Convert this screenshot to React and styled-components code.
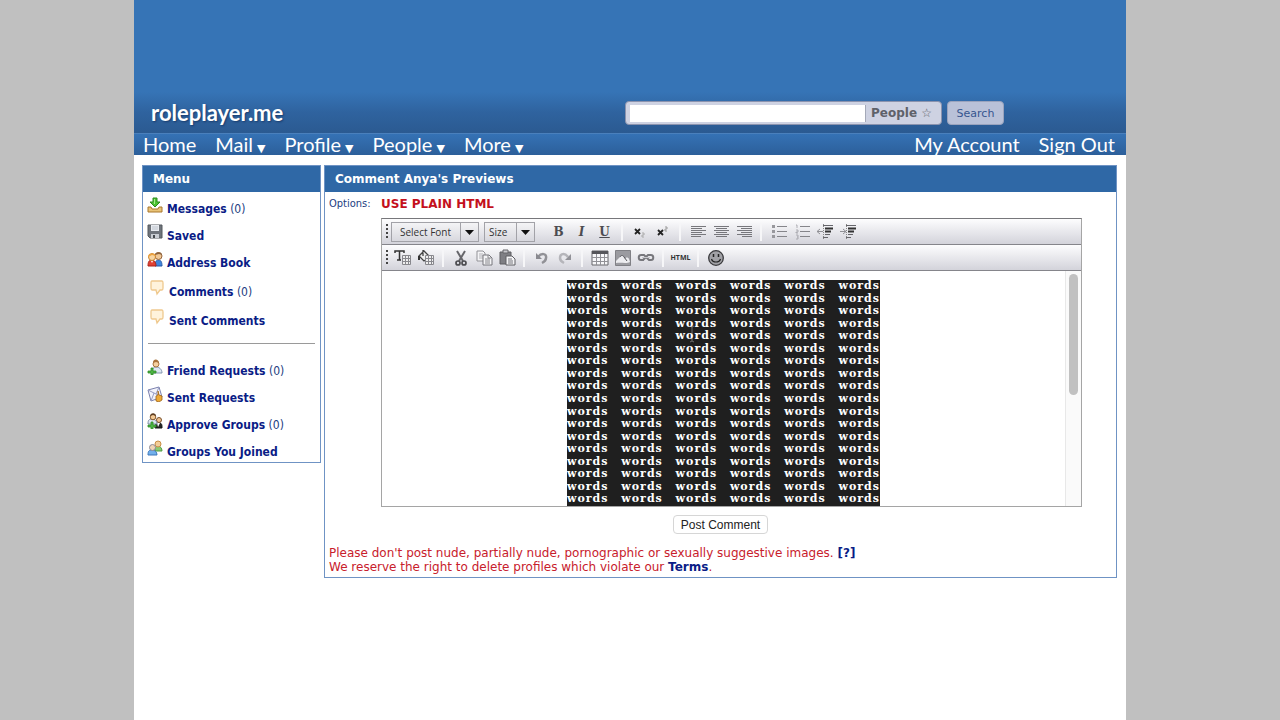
import React from "react";

import styled, { createGlobalStyle } from "styled-components";

const GlobalStyle = createGlobalStyle`
    * {
        box-sizing: border-box;
    }

    body {
        margin: 0;
        padding-right: 20px;
        background: #c0c0c0;
        font-family: Verdana, "DejaVu Sans", sans-serif;
        font-size: 12px;
        color: #1c3d7f;
    }

    button,
    input,
    select {
        font-family: inherit;
        margin: 0;
    }
`;

const Page = styled.div`
    max-width: 992px;
    min-height: 100vh;
    margin: 0 auto;
    background: white;
`;

const Header = styled.header`
    display: flex;
    align-items: flex-end;
    justify-content: space-between;
    height: 133px;
    padding: 0 122px 8px 17px;
    background: linear-gradient(#3674b6 0, #3674b6 92px, #2f639f 112px, #2b5a91 133px);
`;

const Logo = styled.a`
    color: white;
    font-family: "Lato", sans-serif;
    font-size: 22px;
    font-weight: bold;
    line-height: 24px;
    text-decoration: none;
    text-shadow: 1px 1px 2px rgba(10, 35, 80, 0.6);
`;

const SearchForm = styled.form`
    display: flex;
    gap: 5px;
`;

const SearchBox = styled.div`
    display: flex;
    align-items: center;
    width: 317px;
    height: 24px;
    padding: 0 4px;
    border: 1px solid #8b93ae;
    border-radius: 4px;
    background: #ced2e2;
`;

const SearchInput = styled.input`
    flex: 1;
    min-width: 0;
    height: 17px;
    border: none;
    border-right: 1px solid #a4a9b8;
    background: white;
`;

const ScopeButton = styled.button`
    padding: 0 5px;
    border: none;
    background: transparent;
    color: #5f6169;
    font-size: 12px;
    font-weight: bold;
`;

const SearchButton = styled.button`
    width: 57px;
    height: 24px;
    padding: 0;
    border: 1px solid #9aa3bd;
    border-radius: 4px;
    background: #b9c1d8;
    color: #36558f;
    font-size: 11px;
`;

const Nav = styled.nav`
    display: flex;
    gap: 19px;
    height: 22px;
    padding: 0 11px 0 9px;
    border-top: 1px solid #4a80bc;
    background: linear-gradient(#3572b5, #2c5f9a);
`;

const NavLink = styled.a`
    margin-left: ${(props) => (props.$right ? "auto" : "0")};
    color: white;
    font-family: "Century Gothic", "Lato", sans-serif;
    font-size: 20px;
    line-height: 20px;
    text-decoration: none;
    white-space: nowrap;
`;

const Arrow = styled.span`
    margin-left: 4px;
    font-family: "DejaVu Sans", sans-serif;
    font-size: 11px;
`;

const Content = styled.div`
    display: grid;
    grid-template-columns: 179px 1fr;
    align-items: start;
    gap: 3px;
    padding: 10px 9px 10px 8px;
`;

const Panel = styled.section`
    border: 1px solid #6f93c4;
    background: white;
`;

const PanelTitle = styled.h2`
    margin: 0;
    padding: 1px 10px 0;
    background: #2f68a6;
    color: white;
    font-size: 12px;
    line-height: 25px;
`;

const MenuList = styled.ul`
    display: flex;
    flex-direction: column;
    gap: 7px;
    margin: 0;
    padding: 5px 4px 2px;
    list-style: none;
`;

const MenuItem = styled.li`
    display: flex;
    gap: 4px;
    padding: ${(props) => (props.$indent ? "2px 0 0 2px" : "0")};

    svg {
        flex: none;
    }
`;

const MenuLabel = styled.span`
    padding-top: 5px;
    font-family: Tahoma, "DejaVu Sans Condensed", "Noto Sans", sans-serif;
    line-height: 15px;
    white-space: nowrap;
`;

const Link = styled.a`
    color: #0a1c86;
    font-weight: bold;
    text-decoration: none;
`;

const MenuRule = styled.hr`
    height: 1px;
    margin: 12px 5px 10px;
    border: none;
    background: #9a9a9a;
`;

const CommentGrid = styled.div`
    display: grid;
    grid-template-columns: 52px 1fr;
    padding: 0 34px 0 4px;
`;

const OptionText = styled.span`
    font-family: Tahoma, "DejaVu Sans Condensed", "Noto Sans", sans-serif;
    font-size: 11px;
    line-height: 24px;
`;

const PlainLink = styled.a`
    justify-self: start;
    color: #c4101c;
    font-size: 12px;
    font-weight: bold;
    line-height: 24px;
    text-decoration: none;
`;

const Editor = styled.div`
    grid-column: 2;
    margin-top: 2px;
    border: 1px solid #a5a5a5;
    border-top-color: #77777b;
`;

const Toolbar = styled.div`
    display: flex;
    align-items: center;
    height: 26px;
    padding-left: 4px;
    border-bottom: 1px solid #85858b;
    background: linear-gradient(#fdfdfe, #e4e4e9 60%, #d3d3da);
`;

const Grip = styled.span`
    width: 5px;
    height: 16px;
    background: radial-gradient(circle at 1px 1px, #444 1px, transparent 1px) 0 0 / 6px 4px;
`;

const SelectBox = styled.div`
    display: flex;
    width: ${(props) => props.$width};
    height: 20px;
    margin-right: ${(props) => props.$gap || "0"};
    border: 1px solid #a2a2a8;
    background: linear-gradient(#f4f4f6, #d8d8de);
    position: relative;

    svg {
        position: absolute;
        top: 0;
        right: 0;
        pointer-events: none;
    }
`;

const ToolSelect = styled.select`
    width: 100%;
    padding: 0 20px 0 ${(props) => props.$pad};
    border: none;
    appearance: none;
    background: transparent;
    color: #333;
    font-family: "Trebuchet MS", "Open Sans", sans-serif;
    font-size: 10px;
`;

const ToolButton = styled.button`
    display: flex;
    align-items: center;
    justify-content: center;
    width: 23px;
    height: 22px;
    padding: 0;
    border: none;
    background: transparent;
    color: #55555a;
`;

const Separator = styled.span`
    width: 12px;
    height: 18px;
    background: linear-gradient(#f6f6f8, #f6f6f8) center / 2px 18px no-repeat;
`;

const StyleLetter = styled.span`
    color: #4c4c51;
    font-family: "DejaVu Serif", serif;
    font-size: 12px;
    font-weight: bold;
    font-style: ${(props) => (props.$italic ? "italic" : "normal")};
    text-decoration: ${(props) => (props.$underline ? "underline" : "none")};
`;

const HtmlText = styled.span`
    font-family: "Trebuchet MS", "Open Sans", sans-serif;
    font-size: 7px;
    font-weight: bold;
    color: #333;
`;

const EditArea = styled.div`
    display: flex;
    height: 235px;
`;

const EditBody = styled.div`
    position: relative;
    flex: 1;
    display: flex;
    justify-content: center;
    padding-top: 9px;
    outline: none;
`;

const WordSheet = styled.div`
    display: grid;
    grid-template-rows: repeat(18, minmax(0, 1fr));
    width: 313px;
    background: #1f1f1f;
    color: white;
    font-family: "DejaVu Serif", serif;
    font-size: 11px;
    font-weight: bold;
    letter-spacing: 1px;
    line-height: 12px;
`;

const WordRow = styled.div`
    display: flex;
    justify-content: space-between;
`;

const TextCursor = styled.svg`
    position: absolute;
    top: 54px;
    left: 306px;
    opacity: 0.35;
`;

const ScrollTrack = styled.div`
    width: 16px;
    padding: 3px;
    border-left: 1px solid #e8e8e8;
    background: #fafafa;
`;

const ScrollThumb = styled.div`
    width: 9px;
    height: 121px;
    border-radius: 5px;
    background: #c1c1c1;
`;

const PostButton = styled.button`
    display: block;
    width: 95px;
    height: 19px;
    margin: 8px auto 12px;
    padding: 0;
    border: 1px solid #d6d6d6;
    border-radius: 4px;
    background: white;
    color: #222;
    font-family: "Liberation Sans", sans-serif;
    font-size: 12px;
`;

const Notice = styled.p`
    margin: 0;
    padding: 0 4px 3px;
    color: #c8202c;
    font-size: 12px;
    line-height: 14px;
`;

function Svg({ size = 18, children }) {
    return (
        <svg width={size} height={size} viewBox={`0 0 ${size} ${size}`} fill='none' aria-hidden='true'>
            {children}
        </svg>
    );
}

/* menu icons */

const InboxIcon = () => (
    <Svg size={16}>
        <path d='M1 10h3l1 2h6l1-2h3v5H1z' fill='#e9c377' stroke='#a9772c' />
        <path d='M6 1h4v4h3l-5 5-5-5h3z' fill='#4cc233' stroke='#2b8a1e' />
        <path d='M7.500 2v5' stroke='#a5ec8c' />
    </Svg>
);

const DiskIcon = () => (
    <Svg size={16}>
        <path d='M1 1h14v13H3l-2-2z' fill='#6f747b' stroke='#54585e' />
        <path d='M4 1h8v6H4z' fill='#e8ebf0' />
        <path d='M4 10h8v4H4z' fill='#c9cdd3' />
        <path d='M6 11h2v3H6z' fill='#44484d' />
        <path d='M5 3h6M5 5h6' stroke='#bfc5ce' />
    </Svg>
);

const PeopleIcon = () => (
    <Svg size={16}>
        <path d='M8 15c0-4 1-6 3.500-6S15 11 15 15z' fill='#3f86dd' stroke='#2459a8' />
        <circle cx='11.500' cy='5' r='3.500' fill='#f0c896' stroke='#96643a' />
        <path d='M8 4c0-3 6-4 7 0l-3-1z' fill='#8c6440' />
        <path d='M1 15c0-4 1-6 3.500-6S9 11 9 15z' fill='#e14033' stroke='#a82118' />
        <circle cx='5' cy='6' r='3.500' fill='#f7d5a2' stroke='#c98330' />
        <path d='M1 6c0-4 7-5 8-1L5 4z' fill='#eda340' />
        <path d='M4 10l1 2 1-2z' fill='white' />
    </Svg>
);

const BubbleIcon = () => (
    <Svg size={16}>
        <path
            d='M3 1h10q1 0 1 2v5q0 2-1 2h-2l-3 4-1-4H3q-1 0-1-2V3q0-2 1-2z'
            fill='#fff3dc'
            stroke='#efc98e'
            strokeWidth='1.300'
        />
    </Svg>
);

const FriendIcon = () => (
    <Svg size={16}>
        <path d='M5 14c0-4 1-6 4-6s6 2 6 6z' fill='#dde7f2' stroke='#8496b0' />
        <circle cx='9' cy='5' r='3' fill='#f5cf9f' stroke='#a8733f' />
        <path d='M6 4c0-5 6-4 6 0L9 3z' fill='#a8713a' />
        <path d='M4 9h2v3h3v2H6v2H4v-2H1v-2h3z' fill='#4cb443' stroke='#2f8a27' strokeWidth='.8' />
    </Svg>
);

const EnvelopeIcon = () => (
    <Svg size={16}>
        <path d='M1 4l11-3 3 10-11 4z' fill='#f2f3fb' stroke='#7a80ad' />
        <path d='M1 4l8 4 3-7M4 15l3-8M15 11L9 8' stroke='#959bc4' />
        <path d='M11 5l1 4 3 1v4l-3 2-3-1V10l2-1z' fill='#edaa37' stroke='#9d621b' strokeWidth='.8' />
    </Svg>
);

const ApproveIcon = () => (
    <Svg size={16}>
        <path d='M8 15c0-4 1-5 4-5s3 2 3 5z' fill='#242424' stroke='#151515' />
        <path d='M10 10l1 4 2-4z' fill='white' />
        <circle cx='12' cy='7' r='2.500' fill='#edc291' stroke='#7a502a' />
        <path d='M1 11c0-4 1-5 4-5s5 2 5 5z' fill='#dce6f1' stroke='#7d8da5' />
        <circle cx='6' cy='4' r='2.800' fill='#f2ca97' stroke='#875a2e' />
        <path d='M3 3c1-4 6-3 6 0L6 2z' fill='#5e3e22' />
        <path d='M4 9h2v3h3v2H6v2H4v-2H1v-2h3z' fill='#4cb443' stroke='#2f8a27' strokeWidth='.8' />
    </Svg>
);

const GroupIcon = () => (
    <Svg size={16}>
        <path d='M8 11c0-4 1-5 3-5s4 2 4 5z' fill='#8acb73' stroke='#509b42' />
        <circle cx='11' cy='4' r='3' fill='#f2cd98' stroke='#c98d44' />
        <path d='M1 15c0-4 1-5 4-5s5 2 5 5z' fill='#72b0ec' stroke='#3c77bb' />
        <circle cx='5.500' cy='7.500' r='3' fill='#f0d4b5' stroke='#8b8a96' />
    </Svg>
);

/* editor icons */

const DropArrow = () => (
    <Svg>
        <path d='M0 0v18' stroke='#a2a2a8' strokeWidth='2' />
        <path d='M5 7h9l-4.500 5z' fill='#111' />
    </Svg>
);

const SubIcon = () => (
    <Svg>
        <path d='M4 6l5 5M9 6l-5 5' stroke='#222' strokeWidth='1.800' />
        <path d='M11 10h2v2h-2v2h2' stroke='#aaa' />
    </Svg>
);

const SuperIcon = () => (
    <Svg>
        <path d='M4 7l5 5M9 7l-5 5' stroke='#222' strokeWidth='1.800' />
        <path d='M11 4h2v2h-2v2h2' stroke='#999' />
    </Svg>
);

const alignLines = {
    left: "M2 3.500h15M2 5.500h11M2 7.500h15M2 9.500h11M2 11.500h15M2 13.500h10",
    center: "M2 3.500h15M4 5.500h11M2 7.500h15M4 9.500h11M2 11.500h15M4 13.500h11",
    right: "M2 3.500h15M6 5.500h11M2 7.500h15M6 9.500h11M2 11.500h15M7 13.500h10",
};

const AlignIcon = ({ side }) => (
    <Svg>
        <path d={alignLines[side]} stroke='#77777c' />
    </Svg>
);

const BulletsIcon = () => (
    <Svg>
        <path d='M7 3.500h10M7 8.500h10M7 13.500h10' stroke='#85858a' />
        <path d='M2 2h3v3H2zM2 7h3v3H2zM2 12h3v3H2z' fill='#98989d' />
    </Svg>
);

const NumbersIcon = () => (
    <Svg>
        <path d='M7 3.500h10M7 8.500h10M7 13.500h10' stroke='#85858a' />
        <path d='M3 2h1v3M3 7h2v2H3v1h2M3 12h2v4H3M4 14h1' stroke='#a0a0a5' strokeWidth='.8' />
    </Svg>
);

const IndentIcon = ({ out }) => (
    <Svg>
        <path d='M7 2.500h10M9 11.500h5M7 14.500h5' stroke='#66666b' />
        <path d='M9 5.500h8M9 8.500h6' stroke='#333' strokeWidth='2' />
        <path d={out ? "M7 8.500H1M4 6L1 8.500 4 11" : "M1 8.500h6M4 6l3 2.500L4 11"} stroke='#919196' />
        <path d='M7.500 1v16' stroke='#888' strokeDasharray='1 1' />
    </Svg>
);

const TextGridIcon = () => (
    <Svg>
        <path d='M1 4V2h9v2M5.500 2v9M3 11h4' stroke='#333' strokeWidth='1.500' />
        <path d='M8.500 6.500h8v9h-8z' fill='#eee' stroke='#88888d' />
        <path d='M8 9.500h9M8 12.500h9M11.500 6v10M14.500 6v10' stroke='#88888d' />
    </Svg>
);

const FillGridIcon = () => (
    <Svg>
        <path d='M2 7l5-5 6 6-6 4zM6 1v6' fill='#eee' stroke='#444' strokeWidth='1.300' />
        <path d='M2 7v4' stroke='#333' strokeWidth='2' />
        <path d='M8.500 6.500h8v9h-8z' fill='#eee' stroke='#88888d' />
        <path d='M8 9.500h9M8 12.500h9M11.500 6v10M14.500 6v10' stroke='#88888d' />
    </Svg>
);

const CutIcon = () => (
    <Svg>
        <path d='M5 2l6 10M13 2L7 12' stroke='#66666b' strokeWidth='2' />
        <circle cx='6' cy='14' r='2' stroke='#4c4c50' strokeWidth='1.700' />
        <circle cx='12' cy='14' r='2' stroke='#4c4c50' strokeWidth='1.700' />
    </Svg>
);

const CopyIcon = () => (
    <Svg>
        <path d='M2 2h6l2 2v8H2z' fill='#f4f4f6' stroke='#929297' />
        <path d='M4 5h4M4 7h4M4 9h4' stroke='#b1b1b6' />
        <path d='M8 6h6l3 3v7H8z' fill='#f4f4f6' stroke='#77777c' />
        <path d='M10 10h5M10 12h5M10 14h5M13 6v3h3' stroke='#88888d' />
    </Svg>
);

const PasteIcon = () => (
    <Svg>
        <path d='M2 3h11v12H2z' fill='#7f7f84' stroke='#5e5e63' />
        <path d='M5 1h5v3H5z' fill='#c9c9ce' stroke='#66666b' />
        <path d='M8 7h6l3 3v6H8z' fill='#f4f4f6' stroke='#5e5e63' />
        <path d='M10 10h4M10 12h5M10 14h5' stroke='#77777c' />
    </Svg>
);

const UndoIcon = () => (
    <Svg>
        <path d='M5 8c3-4 9-4 8 1 0 2-2 4-4 5' stroke='#919196' strokeWidth='2.500' />
        <path d='M3 4v6h6z' fill='#8a8a90' />
    </Svg>
);

const RedoIcon = () => (
    <Svg>
        <path d='M12 8C9 4 4 4 4 9c0 2 2 4 4 5' stroke='#b5b5ba' strokeWidth='2.500' />
        <path d='M15 5v6H9z' fill='#929298' />
    </Svg>
);

const TableIcon = () => (
    <Svg>
        <path d='M1 2h16v14H1z' fill='#f7f7f9' stroke='#66666b' />
        <path d='M1 2h16v3H1z' fill='#55555a' />
        <path d='M1 8.500h16M1 12.500h16M5.500 5v11M9.500 5v11M13.500 5v11' stroke='#919196' />
    </Svg>
);

const ImageIcon = () => (
    <Svg>
        <path d='M1.500 1.500h15v15h-15z' fill='#9b9ba0' stroke='#808085' />
        <path d='M2 12l4-4c1-2 3-2 4 0l1 2c1-2 3-2 4 0l1 3c-4 2-9 0-14 1z' fill='#ededf0' />
        <path d='M6 8c1-2 3-2 4 0l3 4' stroke='#55555a' />
    </Svg>
);

const LinkIcon = () => (
    <Svg>
        <path
            d='M7 11H4c-3 0-3-5 0-5h3l5 5h2c3 0 3-5 0-5h-3l-5 5'
            stroke='#77777c'
            strokeWidth='2'
        />
        <path d='M5 8.500h8' stroke='#c5c5ca' />
    </Svg>
);

const SmileIcon = () => (
    <Svg>
        <circle cx='9' cy='9' r='7.300' fill='#a1a1a6' stroke='#3a3a3d' strokeWidth='1.300' />
        <path d='M6.500 5v3M11.500 5v3' stroke='#222' strokeWidth='1.500' />
        <path d='M4.500 10c1 4 8 4 9 0' stroke='#222' strokeWidth='1.200' />
    </Svg>
);

const navItems = ["Mail", "Profile", "People", "More"];

const mailItems = [
    { label: "Messages", icon: InboxIcon, count: 0 },
    { label: "Saved", icon: DiskIcon },
    { label: "Address Book", icon: PeopleIcon },
    { label: "Comments", icon: BubbleIcon, count: 0, indent: true },
    { label: "Sent Comments", icon: BubbleIcon, indent: true },
];

const requestItems = [
    { label: "Friend Requests", icon: FriendIcon, count: 0 },
    { label: "Sent Requests", icon: EnvelopeIcon },
    { label: "Approve Groups", icon: ApproveIcon, count: 0 },
    { label: "Groups You Joined", icon: GroupIcon },
];

const formatTools = [
    [
        { name: "Bold", icon: <StyleLetter>B</StyleLetter> },
        { name: "Italic", icon: <StyleLetter $italic>I</StyleLetter> },
        { name: "Underline", icon: <StyleLetter $underline>U</StyleLetter> },
    ],
    [
        { name: "Subscript", icon: <SubIcon /> },
        { name: "Superscript", icon: <SuperIcon /> },
    ],
    [
        { name: "Align left", icon: <AlignIcon side='left' /> },
        { name: "Align center", icon: <AlignIcon side='center' /> },
        { name: "Align right", icon: <AlignIcon side='right' /> },
    ],
    [
        { name: "Bullets", icon: <BulletsIcon /> },
        { name: "Numbering", icon: <NumbersIcon /> },
        { name: "Outdent", icon: <IndentIcon out /> },
        { name: "Indent", icon: <IndentIcon /> },
    ],
];

const insertTools = [
    [
        { name: "Text color", icon: <TextGridIcon /> },
        { name: "Background color", icon: <FillGridIcon /> },
    ],
    [
        { name: "Cut", icon: <CutIcon /> },
        { name: "Copy", icon: <CopyIcon /> },
        { name: "Paste", icon: <PasteIcon /> },
    ],
    [
        { name: "Undo", icon: <UndoIcon /> },
        { name: "Redo", icon: <RedoIcon /> },
    ],
    [
        { name: "Table", icon: <TableIcon /> },
        { name: "Image", icon: <ImageIcon /> },
        { name: "Link", icon: <LinkIcon /> },
    ],
    [{ name: "Edit HTML", icon: <HtmlText>HTML</HtmlText> }],
    [{ name: "Smileys", icon: <SmileIcon /> }],
];

function Tools({ groups }) {
    return groups.map((group, i) => (
        <React.Fragment key={i}>
            {i > 0 && <Separator />}
            {group.map((tool) => (
                <ToolButton type='button' key={tool.name} aria-label={tool.name}>
                    {tool.icon}
                </ToolButton>
            ))}
        </React.Fragment>
    ));
}

function Menu({ items }) {
    return (
        <MenuList>
            {items.map(({ label, icon: Icon, count, indent }) => (
                <MenuItem key={label} $indent={indent}>
                    <Icon />
                    <MenuLabel>
                        <Link href='#'>{label}</Link>
                        {count !== undefined && ` (${count})`}
                    </MenuLabel>
                </MenuItem>
            ))}
        </MenuList>
    );
}

function CommentEditor() {
    return (
        <Editor>
            <Toolbar>
                <Grip />
                <SelectBox $width='88px' $gap='5px'>
                    <ToolSelect $pad='8px' aria-label='Font'>
                        <option>Select Font</option>
                    </ToolSelect>
                    <DropArrow />
                </SelectBox>
                <SelectBox $width='51px' $gap='12px'>
                    <ToolSelect $pad='4px' aria-label='Size'>
                        <option>Size</option>
                    </ToolSelect>
                    <DropArrow />
                </SelectBox>
                <Tools groups={formatTools} />
            </Toolbar>
            <Toolbar>
                <Grip />
                <Tools groups={insertTools} />
            </Toolbar>
            <EditArea>
                <EditBody role='textbox' tabIndex={0} aria-label='Comment'>
                    <WordSheet>
                        {Array.from({ length: 18 }, (_, row) => (
                            <WordRow key={row}>
                                {Array.from({ length: 6 }, (_, col) => (
                                    <span key={col}>words</span>
                                ))}
                            </WordRow>
                        ))}
                    </WordSheet>
                    <TextCursor width='9' height='18' viewBox='0 0 9 18' fill='none'>
                        <path d='M2 1l2 1 2-1M4 2v14M2 17l2-1 2 1' stroke='white' />
                    </TextCursor>
                </EditBody>
                <ScrollTrack>
                    <ScrollThumb />
                </ScrollTrack>
            </EditArea>
        </Editor>
    );
}

export default function App() {
    return (
        <>
            <GlobalStyle />
            <Page>
                <Header>
                    <Logo href='#'>roleplayer.me</Logo>
                    <SearchForm>
                        <SearchBox>
                            <SearchInput type='text' aria-label='Search people' />
                            <ScopeButton type='button'>People ☆</ScopeButton>
                        </SearchBox>
                        <SearchButton type='button'>Search</SearchButton>
                    </SearchForm>
                </Header>

                <Nav>
                    <NavLink href='#'>Home</NavLink>
                    {navItems.map((item) => (
                        <NavLink href='#' key={item}>
                            {item}
                            <Arrow>▼</Arrow>
                        </NavLink>
                    ))}
                    <NavLink href='#' $right>
                        My Account
                    </NavLink>
                    <NavLink href='#'>Sign Out</NavLink>
                </Nav>

                <Content>
                    <Panel>
                        <PanelTitle>Menu</PanelTitle>
                        <Menu items={mailItems} />
                        <MenuRule />
                        <Menu items={requestItems} />
                    </Panel>

                    <Panel>
                        <PanelTitle>Comment Anya's Previews</PanelTitle>
                        <form>
                            <CommentGrid>
                                <OptionText>Options:</OptionText>
                                <PlainLink href='#'>USE PLAIN HTML</PlainLink>
                                <CommentEditor />
                            </CommentGrid>
                            <PostButton type='button'>Post Comment</PostButton>
                        </form>
                        <Notice>
                            Please don't post nude, partially nude, pornographic or sexually suggestive images.{" "}
                            <Link href='#'>[?]</Link>
                            <br />
                            We reserve the right to delete profiles which violate our <Link href='#'>Terms</Link>.
                        </Notice>
                    </Panel>
                </Content>
            </Page>
        </>
    );
}
